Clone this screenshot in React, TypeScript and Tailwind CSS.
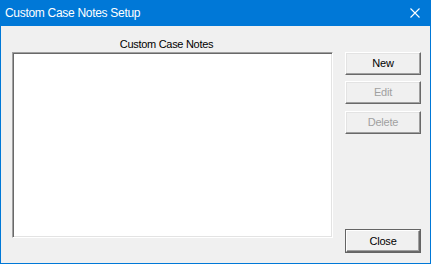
import React from "react";

const font = { fontFamily: '"Liberation Sans", Arial, sans-serif' };

function Btn({ label, disabled, isDefault }: { label: string; disabled?: boolean; isDefault?: boolean }) {
  if (isDefault) {
    return (
      <div className="w-[76px] h-[24px] border border-[#646464] bg-[#f0f0f0]">
        <div className="w-full h-full flex items-center justify-center border-t border-l border-t-white border-l-white border-b border-r border-b-[#696969] border-r-[#696969] shadow-[inset_-1px_-1px_0_#a0a0a0] text-[11px] text-black tracking-[-0.2px]">
          {label}
        </div>
      </div>
    );
  }
  return (
    <div
      className={
        "w-[76px] h-[23px] flex items-center justify-center bg-[#f0f0f0] border-t border-l border-t-white border-l-white border-b border-r border-b-[#696969] border-r-[#696969] shadow-[inset_-1px_-1px_0_#a0a0a0,inset_1px_1px_0_#e3e3e3] text-[11px] tracking-[-0.2px] " +
        (disabled ? "text-[#a0a0a0]" : "text-black")
      }
    >
      {label}
    </div>
  );
}

export default function App() {
  return (
    <div className="w-[431px] h-[264px] bg-[#0078d7] flex flex-col" style={font}>
      <div className="h-[26px] shrink-0 flex items-center pl-[5px] pr-[11px]">
        <span className="text-white text-[12px] tracking-[-0.3px] leading-none">Custom Case Notes Setup</span>
        <svg className="ml-auto" width="10" height="10" viewBox="0 0 10 10">
          <path d="M0.5 0.5 L9.5 9.5 M9.5 0.5 L0.5 9.5" stroke="white" strokeWidth="1.1" fill="none" />
        </svg>
      </div>
      <div className="flex-1 mx-[1px] mb-[1px] bg-[#f0f0f0] flex pl-[11px]">
        <div className="flex flex-col pt-[11px] w-[321px]">
          <div className="h-[14px] leading-[14px] text-[11px] tracking-[-0.3px] text-black w-[309px] text-center">
            Custom Case Notes
          </div>
          <div className="mt-[1px] h-[186px] bg-white border-t border-l border-t-[#a0a0a0] border-l-[#a0a0a0] border-b border-r border-b-white border-r-white shadow-[inset_1px_1px_0_#696969,inset_-1px_-1px_0_#e3e3e3]" />
        </div>
        <div className="ml-[12px] flex flex-col pt-[26px] pb-[10px]">
          <Btn label="New" />
          <div className="mt-[6px]">
            <Btn label="Edit" disabled />
          </div>
          <div className="mt-[7px]">
            <Btn label="Delete" disabled />
          </div>
          <div className="mt-auto">
            <Btn label="Close" isDefault />
          </div>
        </div>
      </div>
    </div>
  );
}
